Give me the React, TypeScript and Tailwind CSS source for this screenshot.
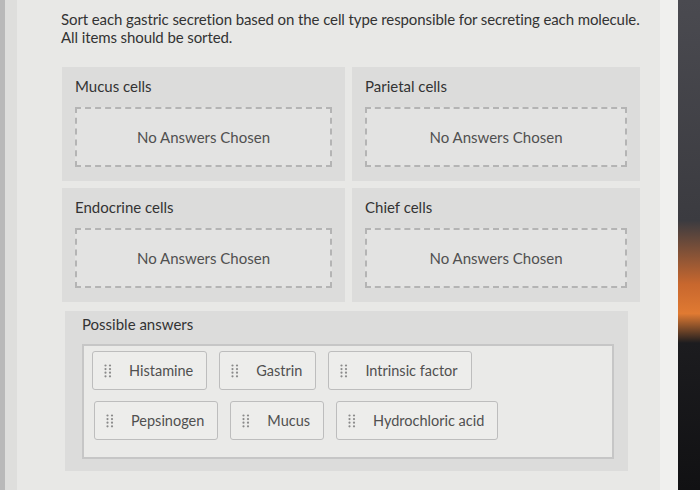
const CATEGORIES = [
  { label: 'Mucus cells' },
  { label: 'Parietal cells' },
  { label: 'Endocrine cells' },
  { label: 'Chief cells' },
];

const ROW_ONE = ['Histamine', 'Gastrin', 'Intrinsic factor'];
const ROW_TWO = ['Pepsinogen', 'Mucus', 'Hydrochloric acid'];

function Handle() {
  // two columns of four dots, the drag grip on each answer chip
  return (
    <svg width="8" height="14" viewBox="0 0 8 14" className="shrink-0" aria-hidden>
      {[0, 1, 2, 3].map((r) => (
        <g key={r} fill="#8a8a8a">
          <circle cx="1.5" cy={1.5 + r * 3.6} r="1.1" />
          <circle cx="6" cy={1.5 + r * 3.6} r="1.1" />
        </g>
      ))}
    </svg>
  );
}

function Chip({ text }: { text: string }) {
  return (
    <div className="flex h-[39px] items-center rounded-[3px] border-[1.5px] border-[#bdbdbd] bg-[#ededeb] pl-[11px] pr-[13px]">
      <Handle />
      <span className="ml-[17px] text-[14.5px] text-[#505050]">{text}</span>
    </div>
  );
}

function Bucket({ label }: { label: string }) {
  return (
    <div className="flex h-[114px] flex-col bg-[#dcdcdb] px-[13px] pt-[9px]">
      <div className="h-[31px] text-[15px] leading-[20px] text-[#333]">{label}</div>
      <div className="flex h-[60px] items-center justify-center border-2 border-dashed border-[#b4b4b4] bg-[#e3e3e2]">
        <span className="text-[15px] text-[#505050]">No Answers Chosen</span>
      </div>
    </div>
  );
}

export default function App() {
  return (
    <div
      className="flex h-[490px] w-[700px] overflow-hidden bg-[#e8e8e6]"
      style={{ fontFamily: 'Lato, "Open Sans", sans-serif' }}
    >
      <div className="w-[5px] shrink-0 bg-[#b9b9b9]" />
      <div className="w-[12px] shrink-0 bg-[#dededc]" />

      <main className="min-w-0 flex-1 pl-[44px] pt-[10px]">
        <p className="whitespace-nowrap text-[15px] leading-[18px] tracking-[-0.1px] text-[#333]">
          Sort each gastric secretion based on the cell type responsible for secreting each molecule.
          <br />
          All items should be sorted.
        </p>

        <div className="mt-[21px] grid w-[585px] grid-cols-[283px_288px] gap-x-[7px] gap-y-[7px] pl-[1px]">
          {CATEGORIES.map((c) => (
            <Bucket key={c.label} label={c.label} />
          ))}
        </div>

        <section className="ml-[4px] mt-[9px] h-[160px] w-[563px] bg-[#dcdcdb] pl-[17px] pr-[14px] pt-[3px]">
          <div className="h-[30px] text-[15px] leading-[20px] text-[#333]">Possible answers</div>
          <div className="flex h-[115px] flex-col gap-[11px] border-2 border-[#c6c6c6] bg-[#eaeae8] pl-[8px] pt-[5px]">
            <div className="flex gap-[12px]">
              {ROW_ONE.map((t) => (
                <Chip key={t} text={t} />
              ))}
            </div>
            <div className="flex gap-[12px] pl-[2px]">
              {ROW_TWO.map((t) => (
                <Chip key={t} text={t} />
              ))}
            </div>
          </div>
        </section>
      </main>

      <div className="w-[18px] shrink-0 bg-[#f0f0ee]" />
      <div className="w-[22px] shrink-0 bg-[linear-gradient(to_bottom,#4a4a50_0%,#3b3b40_45%,#c8672e_58%,#e07a32_64%,#1c1c1f_70%,#111113_100%)]" />
    </div>
  );
}
